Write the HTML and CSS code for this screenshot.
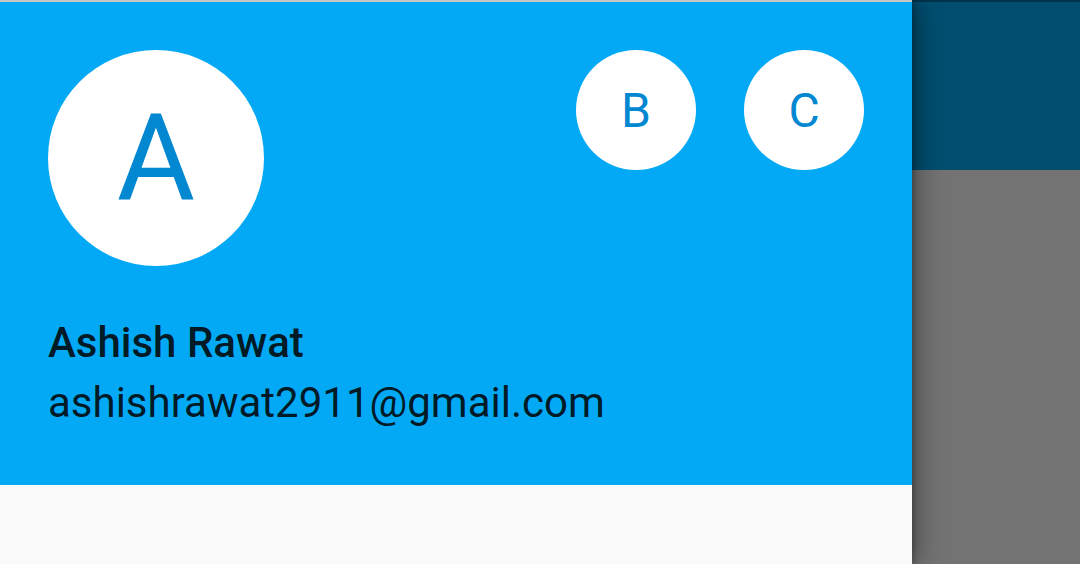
FILE: index.html
```html
<!DOCTYPE html>
<html>
<head>
<meta charset="utf-8">
<link rel="stylesheet" href="styles.css">
</head>
<body>
<div class="screen">
  <aside class="drawer">
    <div class="status-strip"></div>
    <header class="account-header">
      <div class="avatars">
        <div class="avatar avatar-main">A</div>
        <div class="others">
          <div class="avatar avatar-small">B</div>
          <div class="avatar avatar-small">C</div>
        </div>
      </div>
      <div class="account-name">Ashish Rawat</div>
      <div class="account-email">ashishrawat2911@gmail.com</div>
    </header>
    <div class="drawer-body"></div>
  </aside>
  <div class="scrim">
    <div class="scrim-status"></div>
    <div class="scrim-appbar"></div>
    <div class="scrim-body"></div>
  </div>
</div>
</body>
</html>
```

FILE: styles.css
```css
html, body {
  margin: 0;
  padding: 0;
  width: 1080px;
  height: 564px;
  overflow: hidden;
  font-family: Roboto, "Noto Sans", sans-serif;
}

.screen {
  display: flex;
  width: 1080px;
  height: 564px;
}

.drawer {
  width: 912px;
  flex: none;
  display: flex;
  flex-direction: column;
  background: #fafafa;
  position: relative;
  z-index: 2;
  box-shadow: 6px 0 24px rgba(0, 0, 0, 0.35), 2px 0 6px rgba(0, 0, 0, 0.25);
}

.status-strip {
  height: 2px;
  background: #c6c6c6;
}

.account-header {
  height: 483px;
  background: #03a9f4;
  box-sizing: border-box;
  padding: 48px 48px 0 48px;
  display: flex;
  flex-direction: column;
}

.avatars {
  display: flex;
  justify-content: space-between;
  align-items: flex-start;
}

.avatar {
  background: #ffffff;
  border-radius: 50%;
  color: #0288d1;
  display: flex;
  align-items: center;
  justify-content: center;
  flex: none;
}

.avatar-main {
  width: 216px;
  height: 216px;
  font-size: 120px;
}

.others {
  display: flex;
  gap: 48px;
}

.avatar-small {
  width: 120px;
  height: 120px;
  font-size: 48px;
}

.account-name {
  margin-top: 47px;
  font-size: 42px;
  font-weight: 500;
  line-height: 60px;
  color: rgba(0, 0, 0, 0.87);
}

.account-email {
  font-size: 42px;
  font-weight: 400;
  line-height: 60px;
  color: rgba(0, 0, 0, 0.87);
}

.drawer-body {
  flex: 1;
  background: #fafafa;
}

.scrim {
  flex: 1;
  display: flex;
  flex-direction: column;
}

.scrim-status {
  height: 2px;
  background: #01344c;
}

.scrim-appbar {
  height: 168px;
  background: #014e70;
}

.scrim-body {
  flex: 1;
  background: #737373;
}
```
